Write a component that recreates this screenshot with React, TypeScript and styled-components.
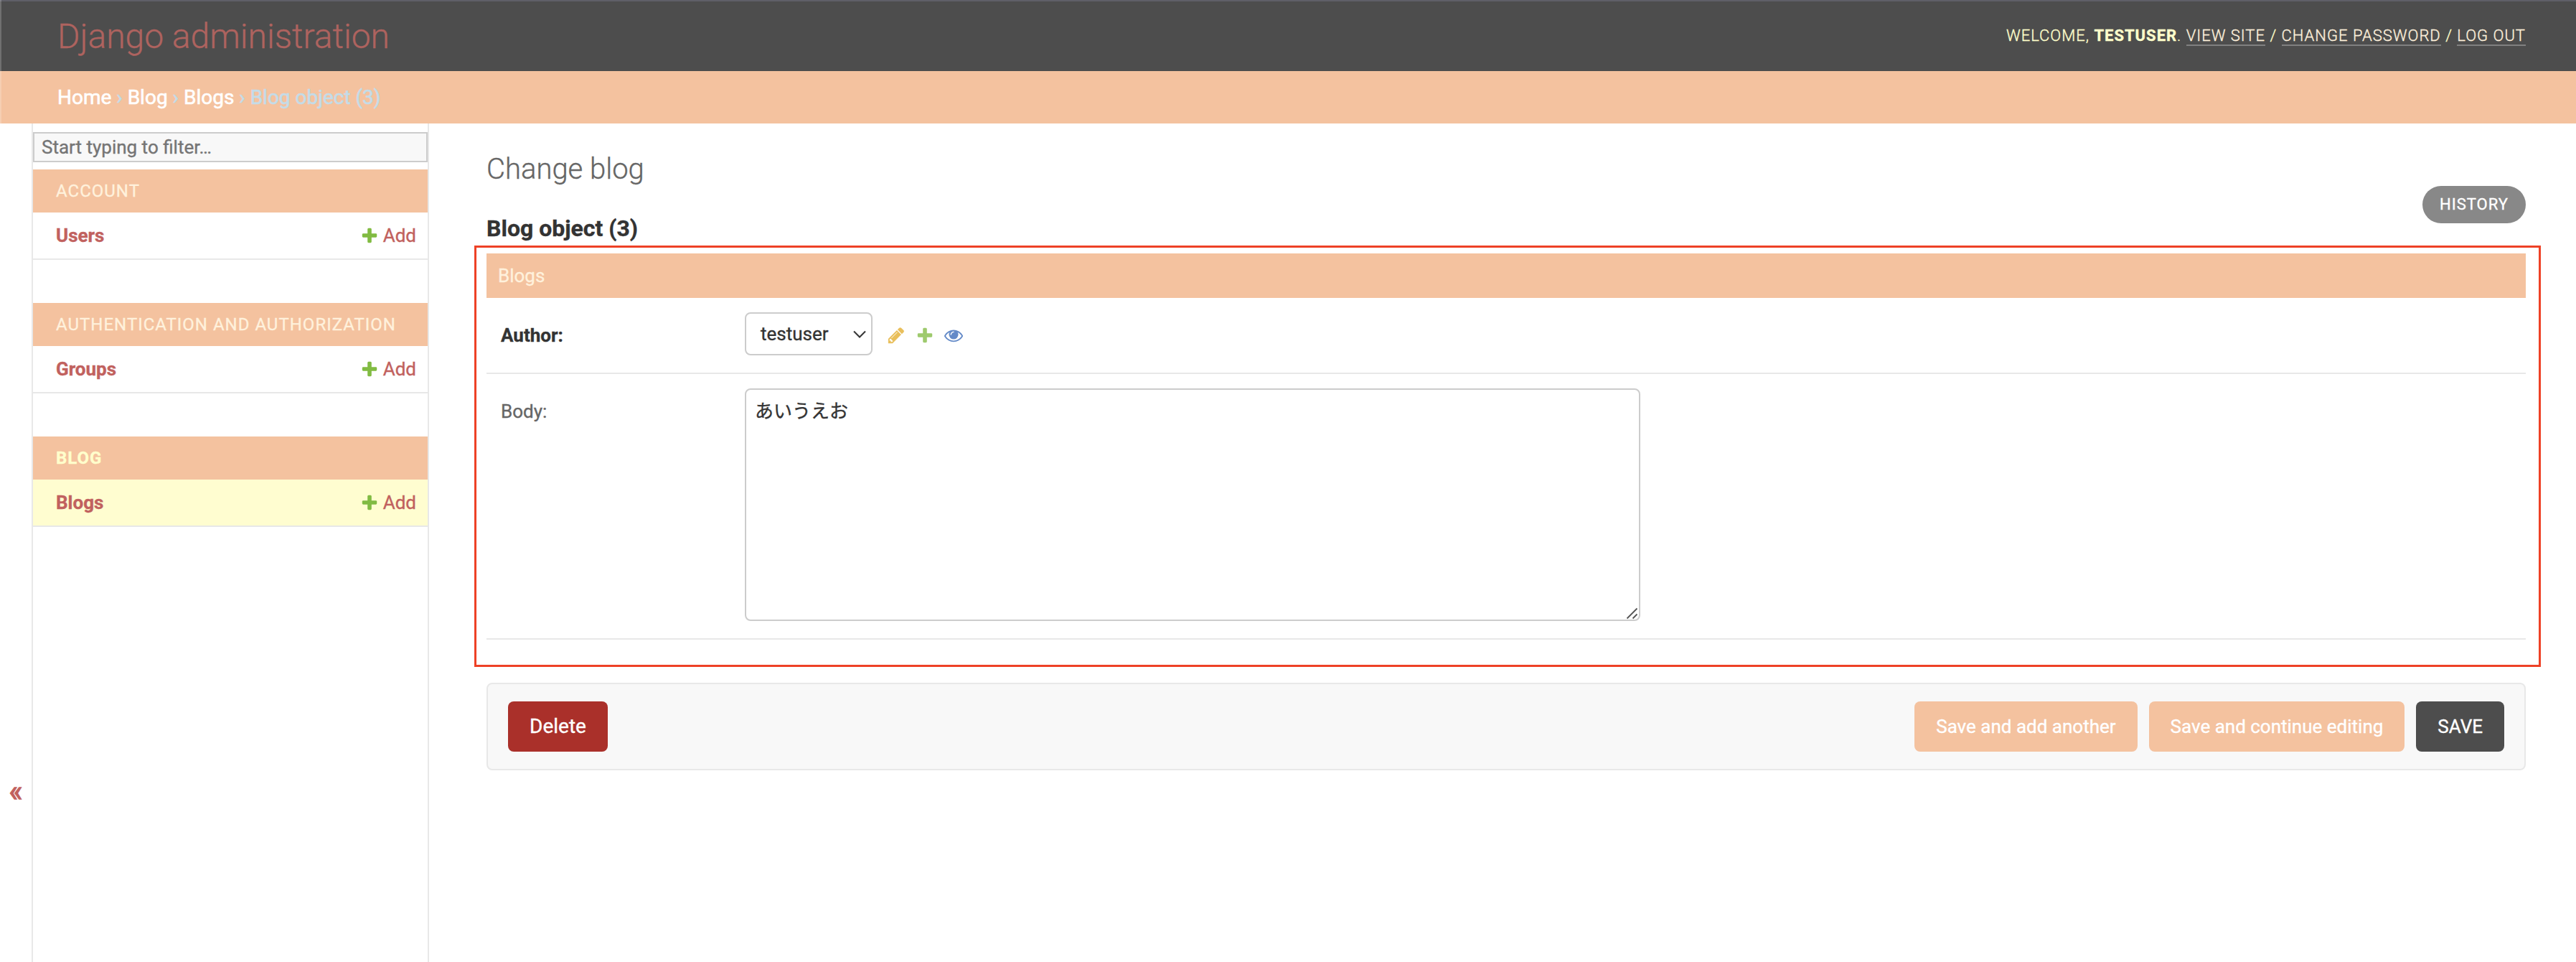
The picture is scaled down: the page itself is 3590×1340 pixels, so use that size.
import React from 'react';
import styled, { createGlobalStyle } from 'styled-components';

const peach = '#f4c29f';
const link = '#c1615e';
const hairline = '#e8e8e8';

const GlobalStyle = createGlobalStyle`
  *, *::before, *::after { box-sizing: border-box; }
  html, body { margin: 0; padding: 0; background: #fff; }
  body {
    font-family: Roboto, "Noto Sans CJK JP", "Liberation Sans", sans-serif;
    font-size: 26px;
    line-height: 1.5;
    color: #333;
    overflow: hidden;
    -webkit-text-stroke: 0.35px;
  }
  h1, h2 { margin: 0; }
  a { text-decoration: none; color: inherit; }
`;

const Page = styled.div`
  position: relative;
  display: flex;
  flex-direction: column;
  height: 1340px;
  &::before {
    content: '';
    position: absolute;
    left: 0;
    top: 0;
    width: 2px;
    height: 172px;
    background: rgba(255, 255, 255, 0.2);
  }
`;

const Header = styled.header`
  display: flex;
  justify-content: space-between;
  align-items: center;
  flex: none;
  height: 99px;
  padding: 0 70px 0 80px;
  border-top: 2px solid #5f5f68;
  background: #4d4d4d;
`;

const SiteName = styled.h1`
  font-size: 48px;
  font-weight: 300;
  line-height: 56px;
  color: #ae635f;
`;

const UserTools = styled.div`
  font-size: 22px;
  font-weight: 300;
  line-height: 26px;
  letter-spacing: 1px;
  text-transform: uppercase;
  color: #ffffcc;
  padding-bottom: 2px;
  strong { font-weight: 700; }
`;

const ToolLink = styled.a`
  color: #fdf0dc;
  border-bottom: 2px solid #808080;
`;

const Breadcrumbs = styled.nav`
  flex: none;
  height: 73px;
  padding: 0 80px;
  font-size: 28px;
  line-height: 73px;
  background: ${peach};
  color: #c4dce8;
  -webkit-text-stroke: 0.6px;
  a { color: #fff; }
`;

const Body = styled.div`
  display: flex;
  flex: 1;
  min-height: 0;
`;

const Toggle = styled.button`
  width: 44px;
  flex: none;
  display: flex;
  justify-content: center;
  align-items: flex-start;
  border: 0;
  padding: 907px 0 0;
  background: none;
  font: 400 40px/47px Roboto, sans-serif;
  -webkit-text-stroke: 1.3px;
  color: ${link};
`;

const Sidebar = styled.aside`
  width: 554px;
  flex: none;
  padding-top: 12px;
  border: solid ${hairline};
  border-width: 0 2px;
`;

const Filter = styled.input`
  display: block;
  width: 100%;
  height: 42px;
  margin-bottom: 10px;
  padding: 0 10px;
  border: 2px solid #ccc;
  border-radius: 0;
  background: #f8f8f8;
  font: 400 26px Roboto, sans-serif;
  &::placeholder { color: #757575; opacity: 1; }
`;

const Module = styled.section`
  margin-bottom: 60px;
`;

const ModuleTitle = styled.h2<{ $current?: boolean }>`
  padding: 0 32px;
  font-size: 24px;
  line-height: 60px;
  letter-spacing: 1px;
  text-transform: uppercase;
  white-space: nowrap;
  background: ${peach};
  font-weight: ${p => (p.$current ? 700 : 400)};
  color: ${p => (p.$current ? '#ffffcc' : '#fff1dc')};
`;

const ModelRow = styled.div<{ $current?: boolean }>`
  display: flex;
  justify-content: space-between;
  align-items: center;
  height: 66px;
  padding: 0 16px 0 32px;
  border-bottom: 2px solid ${hairline};
  color: ${link};
  background: ${p => (p.$current ? '#fffdd0' : '#fff')};
  strong { font-weight: 700; }
`;

const AddLink = styled.a`
  display: flex;
  align-items: center;
  gap: 6px;
`;

const Content = styled.main`
  flex: 1;
  padding: 33px 70px 0 80px;
`;

const PageTitle = styled.h1`
  height: 61px;
  font-size: 40px;
  font-weight: 300;
  line-height: 62px;
  color: #666;
`;

const ObjectHead = styled.div`
  display: flex;
  justify-content: space-between;
  align-items: flex-start;
  height: 87px;
`;

const ObjectName = styled.h2`
  padding-top: 33px;
  font-size: 32px;
  font-weight: 700;
  line-height: 38px;
`;

const HistoryLink = styled.a`
  width: 144px;
  height: 52px;
  margin-top: -7px;
  border-radius: 26px;
  background: #888;
  color: #fff;
  font-size: 22px;
  line-height: 51px;
  letter-spacing: 1px;
  text-align: center;
`;

const Fieldset = styled.section`
  position: relative;
  height: 538px;
  &::after {
    content: '';
    position: absolute;
    inset: -11px -21px -38px -17px;
    border: 3px solid #ee4126;
    pointer-events: none;
  }
`;

const FieldsetTitle = styled.h2`
  height: 62px;
  padding-left: 16px;
  font-size: 26px;
  font-weight: 400;
  line-height: 62px;
  background: ${peach};
  color: #fff1dc;
`;

const FormRow = styled.div`
  display: flex;
  align-items: flex-start;
  padding: 20px 0 24px 20px;
  border-bottom: 2px solid ${hairline};
`;

const Label = styled.label<{ $required?: boolean }>`
  flex: none;
  width: 340px;
  padding-top: 12px;
  line-height: 40px;
  font-weight: ${p => (p.$required ? 700 : 400)};
  color: ${p => (p.$required ? '#333' : '#666')};
`;

const SelectBox = styled.button`
  display: flex;
  justify-content: space-between;
  align-items: center;
  width: 178px;
  height: 60px;
  padding: 1px 7px 0 20px;
  border: 2px solid #ccc;
  border-radius: 8px;
  background: #fff;
  color: #333;
  font: 400 26px/55px Roboto, sans-serif;
`;

const Related = styled.div`
  display: flex;
  gap: 14px;
  padding: 19px 0 0 20px;
  opacity: 0.77;
`;

const AreaWrap = styled.div`
  position: relative;
  width: 1248px;
  height: 324px;
`;

const Area = styled.textarea`
  display: block;
  width: 100%;
  height: 100%;
  padding: 11px 12px;
  border: 2px solid #ccc;
  border-radius: 8px;
  resize: none;
  outline: none;
  color: #333;
  font: 400 26px/39px Roboto, "Noto Sans CJK JP", sans-serif;
`;

const Grip = styled.svg`
  position: absolute;
  right: 2px;
  bottom: 2px;
`;

const SubmitRow = styled.div`
  display: flex;
  align-items: flex-start;
  gap: 16px;
  height: 122px;
  margin-top: 60px;
  padding: 24px 28px;
  border: 2px solid ${hairline};
  border-radius: 8px;
  background: #f8f8f8;
`;

const Button = styled.button<{ $bg: string; $size?: number; $end?: boolean }>`
  height: 70px;
  padding: 0 30px 1px;
  border: 0;
  border-radius: 8px;
  color: #fff;
  background: ${p => p.$bg};
  font: 400 ${p => p.$size ?? 26}px Roboto, sans-serif;
  margin-right: ${p => (p.$end ? 'auto' : '0')};
`;

const paths = {
  add: 'M1600 796v192q0 40-28 68t-68 28h-416v416q0 40-28 68t-68 28h-192q-40 0-68-28t-28-68v-416h-416q-40 0-68-28t-28-68v-192q0-40 28-68t68-28h416v-416q0-40 28-68t68-28h192q40 0 68 28t28 68v416h416q40 0 68 28t28 68z',
  change:
    'M491 1536l91-91-235-235-91 91v107h128v128h107zm523-928q0-22-22-22-10 0-17 7l-542 542q-7 7-7 17 0 22 22 22 10 0 17-7l542-542q7-7 7-17zm-54-192l416 416-832 832h-416v-416zm683 96q0 53-37 90l-166 166-416-416 166-165q36-38 90-38 53 0 91 38l235 234q37 39 37 91z',
  view: 'M1664 960q-152-236-381-353 61 104 61 225 0 185-131.5 316.5t-316.5 131.5-316.5-131.5-131.5-316.5q0-121 61-225-229 117-381 353 133 205 333.5 326.5t434.5 121.5 434.5-121.5 333.5-326.5zm-720-384q0-20-14-34t-34-14q-125 0-214.5 89.5t-89.5 214.5q0 20 14 34t34 14 34-14 14-34q0-86 61-147t147-61q20 0 34-14t14-34zm848 384q0 34-20 69-140 230-376.5 368.5t-499.5 138.5-499.5-139-376.5-368q-20-35-20-69t20-69q140-229 376.5-368t499.5-139 499.5 139 376.5 368q20 35 20 69z',
};

const Icon = ({ name, color }: { name: keyof typeof paths; color: string }) => (
  <svg width="26" height="26" viewBox="0 0 1792 1792" fill={color}>
    <path d={paths[name]} />
  </svg>
);

const apps = [
  { title: 'Account', model: 'Users' },
  { title: 'Authentication and Authorization', model: 'Groups' },
  { title: 'Blog', model: 'Blogs', current: true },
];

export default function App() {
  return (
    <>
      <GlobalStyle />
      <Page>
        <Header>
          <SiteName>Django administration</SiteName>
          <UserTools>
            Welcome, <strong>testuser</strong>. <ToolLink>View site</ToolLink> /{' '}
            <ToolLink>Change password</ToolLink> / <ToolLink>Log out</ToolLink>
          </UserTools>
        </Header>
        <Breadcrumbs>
          <a>Home</a> › <a>Blog</a> › <a>Blogs</a> › Blog object (3)
        </Breadcrumbs>
        <Body>
          <Toggle>«</Toggle>
          <Sidebar>
            <Filter placeholder="Start typing to filter…" />
            {apps.map(app => (
              <Module key={app.title}>
                <ModuleTitle $current={app.current}>{app.title}</ModuleTitle>
                <ModelRow $current={app.current}>
                  <strong>{app.model}</strong>
                  <AddLink>
                    <Icon name="add" color="#81bb42" />
                    Add
                  </AddLink>
                </ModelRow>
              </Module>
            ))}
          </Sidebar>
          <Content>
            <PageTitle>Change blog</PageTitle>
            <ObjectHead>
              <ObjectName>Blog object (3)</ObjectName>
              <HistoryLink>HISTORY</HistoryLink>
            </ObjectHead>
            <Fieldset>
              <FieldsetTitle>Blogs</FieldsetTitle>
              <FormRow>
                <Label $required>Author:</Label>
                <SelectBox>
                  testuser
                  <svg width="18" height="12" viewBox="0 0 18 12" fill="none" stroke="#333" strokeWidth="2">
                    <path d="M1 1.5l8 8 8-8" />
                  </svg>
                </SelectBox>
                <Related>
                  <Icon name="change" color="#e3ad2b" />
                  <Icon name="add" color="#81bb42" />
                  <Icon name="view" color="#3668b8" />
                </Related>
              </FormRow>
              <FormRow>
                <Label>Body:</Label>
                <AreaWrap>
                  <Area defaultValue="あいうえお" />
                  <Grip width="18" height="18" viewBox="0 0 18 18" stroke="#555" strokeWidth="1.8">
                    <path d="M1.500 16.500L15.500 2.500M9.500 16.500L15.500 10.500" />
                  </Grip>
                </AreaWrap>
              </FormRow>
            </Fieldset>
            <SubmitRow>
              <Button $bg="#aa302a" $size={28} $end>Delete</Button>
              <Button $bg={peach}>Save and add another</Button>
              <Button $bg={peach}>Save and continue editing</Button>
              <Button $bg="#4d4d4d">SAVE</Button>
            </SubmitRow>
          </Content>
        </Body>
      </Page>
    </>
  );
}
